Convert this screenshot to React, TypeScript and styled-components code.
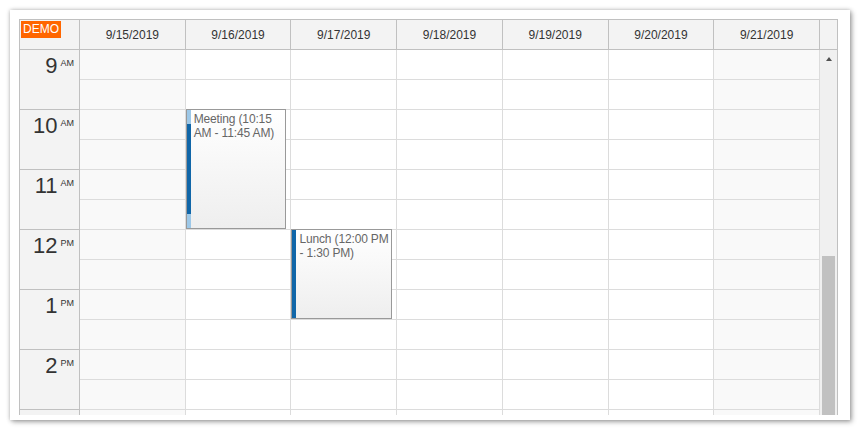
import styled, { createGlobalStyle } from "styled-components";

const DAYS = [
  { label: "9/15/2019", weekend: true },
  { label: "9/16/2019", weekend: false },
  { label: "9/17/2019", weekend: false },
  { label: "9/18/2019", weekend: false },
  { label: "9/19/2019", weekend: false },
  { label: "9/20/2019", weekend: false },
  { label: "9/21/2019", weekend: true },
];

// the last row is only partly visible and shows no label
const HOURS = [
  { n: "9", ap: "AM" },
  { n: "10", ap: "AM" },
  { n: "11", ap: "AM" },
  { n: "12", ap: "PM" },
  { n: "1", ap: "PM" },
  { n: "2", ap: "PM" },
  { n: "", ap: "" },
];

type CalEvent = {
  day: number;
  text: string;
  // minutes from 9:00, snapped box and real duration bar
  boxStart: number;
  boxLength: number;
  barStart: number;
  barLength: number;
};

const EVENTS: CalEvent[] = [
  { day: 1, text: "Meeting (10:15 AM - 11:45 AM)", boxStart: 60, boxLength: 120, barStart: 15, barLength: 90 },
  { day: 2, text: "Lunch (12:00 PM - 1:30 PM)", boxStart: 180, boxLength: 90, barStart: 0, barLength: 90 },
];

const GlobalStyle = createGlobalStyle`
  body {
    margin: 0;
    background: #fff;
    font-family: "Liberation Sans", Arial, sans-serif;
  }
`;

export default function App() {
  return (
    <>
      <GlobalStyle />
      <Frame>
        <Calendar>
          <HeaderRow>
            <Corner>
              <Demo>DEMO</Demo>
            </Corner>
            {DAYS.map((d) => (
              <DayHeader key={d.label}>{d.label}</DayHeader>
            ))}
            <ScrollHeader />
          </HeaderRow>
          <Body>
            <RowHeader>
              {HOURS.map((h, i) => (
                <HourCell key={i}>
                  {h.n && (
                    <>
                      <HourNum>{h.n}</HourNum>
                      <AmPm>{h.ap}</AmPm>
                    </>
                  )}
                </HourCell>
              ))}
            </RowHeader>
            {DAYS.map((d, i) => (
              <DayColumn key={d.label}>
                {HOURS.flatMap((_, k) => [
                  <HalfCell key={k + "a"} $weekend={d.weekend} />,
                  <HalfCell key={k + "b"} $weekend={d.weekend} />,
                ])}
                {EVENTS.filter((e) => e.day === i).map((e) => (
                  <EventBox
                    key={e.text}
                    style={{ top: e.boxStart - 1, height: e.boxLength }}
                  >
                    <BarTrack>
                      <Bar style={{ top: e.barStart === 0 ? 0 : e.barStart - 1, height: e.barLength }} />
                    </BarTrack>
                    <EventText>{e.text}</EventText>
                  </EventBox>
                ))}
              </DayColumn>
            ))}
            <ScrollTrack>
              <Arrow />
              <Thumb />
            </ScrollTrack>
          </Body>
        </Calendar>
      </Frame>
    </>
  );
}

const Frame = styled.div`
  box-sizing: border-box;
  margin: 10px;
  width: 840px;
  height: 410px;
  padding: 9px 13px 5px 9px;
  background: #fff;
  box-shadow: 0 0 4px rgba(0, 0, 0, 0.25), 2px 2px 5px rgba(0, 0, 0, 0.3);
`;

const Calendar = styled.div`
  box-sizing: border-box;
  width: 819px;
  height: 396px;
  border: 1px solid #c0c0c0;
  border-bottom: none;
  overflow: hidden;
  display: flex;
  flex-direction: column;
`;

const HeaderRow = styled.div`
  box-sizing: border-box;
  flex: none;
  display: grid;
  grid-template-columns: 60px repeat(7, 1fr) 17px;
  height: 30px;
  background: #f3f3f3;
  border-bottom: 1px solid #c0c0c0;
`;

const Corner = styled.div`
  border-right: 1px solid #c0c0c0;
  padding: 1px;
  display: flex;
  align-items: flex-start;
`;

const Demo = styled.div`
  background: #ff6600;
  color: #fff;
  font-size: 12px;
  line-height: 17px;
  padding: 0 2px;
`;

const DayHeader = styled.div`
  border-right: 1px solid #c0c0c0;
  display: flex;
  align-items: center;
  justify-content: center;
  font-size: 12px;
  color: #333;
  padding-top: 1px;
`;

const ScrollHeader = styled.div``;

const Body = styled.div`
  flex: 1;
  min-height: 0;
  display: grid;
  grid-template-columns: 60px repeat(7, 1fr) 17px;
  overflow: hidden;
`;

const RowHeader = styled.div`
  background: #f3f3f3;
  border-right: 1px solid #c0c0c0;
`;

const HourCell = styled.div`
  box-sizing: border-box;
  height: 60px;
  border-bottom: 1px solid #c0c0c0;
  display: flex;
  justify-content: flex-end;
  align-items: flex-start;
  padding-right: 5px;
  color: #333;
`;

const HourNum = styled.span`
  font-size: 22px;
  line-height: 26px;
  margin-top: 3px;
`;

const AmPm = styled.span`
  font-size: 9px;
  line-height: 10px;
  margin-top: 8px;
  margin-left: 3px;
`;

const DayColumn = styled.div`
  position: relative;
  border-right: 1px solid #dcdcdc;
`;

const HalfCell = styled.div<{ $weekend: boolean }>`
  box-sizing: border-box;
  height: 30px;
  border-bottom: 1px solid #dcdcdc;
  background: ${(p) => (p.$weekend ? "#f9f9f9" : "#fff")};
`;

const EventBox = styled.div`
  position: absolute;
  left: 0;
  width: calc(100% - 4px);
  box-sizing: border-box;
  border: 1px solid #999;
  background: linear-gradient(to bottom, #fff, #eee);
  overflow: hidden;
`;

const BarTrack = styled.div`
  position: absolute;
  left: 0;
  top: 0;
  bottom: 0;
  width: 4px;
  background: #9dc8e8;
`;

const Bar = styled.div`
  position: absolute;
  left: 0;
  width: 4px;
  background: #1066a8;
`;

const EventText = styled.div`
  padding: 2px 0 0 7px;
  font-size: 12px;
  line-height: 14px;
  letter-spacing: -0.15px;
  color: #666;
`;

const ScrollTrack = styled.div`
  position: relative;
  background: #f0f0f0;
  display: flex;
  flex-direction: column;
  align-items: center;
`;

const Arrow = styled.div`
  margin-top: 7px;
  width: 0;
  height: 0;
  border-left: 3.5px solid transparent;
  border-right: 3.5px solid transparent;
  border-bottom: 4px solid #505050;
`;

const Thumb = styled.div`
  margin-top: 195px;
  width: 13px;
  flex: 1;
  background: #c1c1c1;
`;
